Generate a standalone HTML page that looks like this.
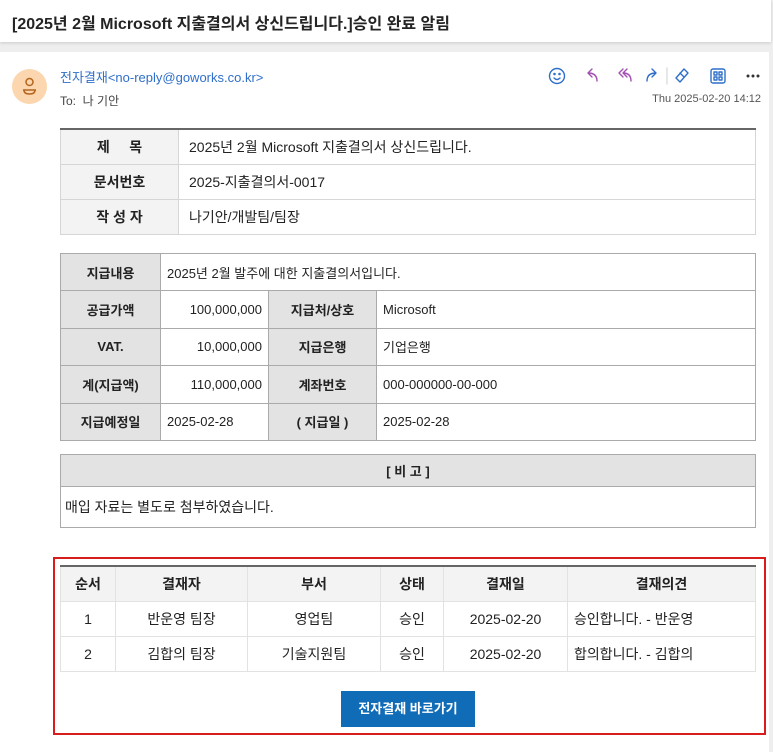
<!DOCTYPE html>
<html><head><meta charset="utf-8"><style>
*{box-sizing:border-box;margin:0;padding:0}
body{width:773px;height:746px;background:#eeeeee;font-family:"Liberation Sans","Noto Sans CJK KR",sans-serif;color:#222;position:relative;overflow:hidden}
.hdr{position:absolute;left:0;top:0;width:771px;height:42px;background:#fff;box-shadow:0 1px 3px rgba(0,0,0,.15)}
.hdr div{position:absolute;left:12px;top:10px;font-size:16px;font-weight:bold;color:#242424}
.card{position:absolute;left:0;top:52px;width:769px;height:700px;background:#fff}
.av{position:absolute;left:12px;top:69px;width:35px;height:35px;border-radius:50%;background:#fbd6ae}
.from{position:absolute;left:60px;top:67px;font-size:13px;color:#2f6fc9}
.to{position:absolute;left:60px;top:92px;font-size:12px;color:#444}
.date{position:absolute;right:12px;top:93px;font-size:11px;color:#555}
table{position:absolute;border-collapse:collapse;font-size:13px}
td{border:1px solid #d6d6d6;padding:0 6px}
.t1{left:60px;top:128px;width:696px;border-top:2px solid #666}
.t1 td{height:35px;font-size:14px;padding-left:10px}
.t1 .l{width:118px;background:#f3f3f3;text-align:center;font-weight:bold;padding:0}
.t2{left:60px;top:253px;width:696px}
.t2 td{height:37.4px;border-color:#aaa}
.t2 .l{background:#e3e3e3;text-align:center;font-weight:bold;padding:0}
.r{text-align:right}
.t4{left:60px;top:454px;width:696px}
.t4 td{border-color:#aaa}
.t3{left:60px;top:565px;width:696px;border-top:2px solid #666;font-size:14px}
.t3 td{height:35px;text-align:center;border-color:#e2e2e2}
.t3 .h td{background:#f3f3f3;font-weight:bold}
.red{position:absolute;left:53px;top:557px;width:713px;height:178px;border:2px solid #d91c1c}
.btn{position:absolute;left:341px;top:691px;width:134px;height:36px;background:#116cb7;color:#fff;font-weight:bold;font-size:13px;text-align:center;line-height:36px}
.ic{position:absolute;top:65px}
</style></head><body>
<div class="hdr"><div>[2025년 2월 Microsoft 지출결의서 상신드립니다.]승인 완료 알림</div></div>
<div class="card"></div>
<div class="av"><svg width="35" height="35" viewBox="0 0 35 35"><circle cx="17.5" cy="13" r="3.5" fill="none" stroke="#b5651d" stroke-width="1.5"/><path d="M11 21h13M12 21q0 4 5.5 4t5.5-4" fill="none" stroke="#b5651d" stroke-width="1.5"/></svg></div>
<div class="from">전자결재&lt;no-reply@goworks.co.kr&gt;</div>
<div class="to">To:&nbsp; 나 기안</div>
<div class="date">Thu 2025-02-20 14:12</div>
<svg class="ic" style="left:545px" width="220" height="22" viewBox="0 0 220 22" fill="none" stroke="#2f6fc9" stroke-width="1.4" stroke-linecap="round" stroke-linejoin="round">
<circle cx="12" cy="11" r="7.5"/><circle cx="9.5" cy="9" r=".6"/><circle cx="14.5" cy="9" r=".6"/><path d="M9 13q3 3 6 0"/>
<path d="M52 16q0-8-9-8M43 8l4-4M43 8l4 4" stroke="#a24fb3"/>
<path d="M86 16q0-8-8-8M78 8l4-4M78 8l4 4M74 8l4-4M74 8l4 4" stroke="#a24fb3"/>
<path d="M102 16q0-8 9-8M111 8l-4-4M111 8l-4 4"/>
<path d="M122 3v16" stroke="#ddd"/>
<path d="M139 4l4 4-8 9-4-4zM135 8l4 4"/>
<rect x="166" y="4" width="14" height="14" rx="2"/><rect x="169" y="7" width="3" height="3"/><rect x="174" y="7" width="3" height="3"/><rect x="169" y="12" width="3" height="3"/><rect x="174" y="12" width="3" height="3"/>
<circle cx="203" cy="11" r=".8" fill="#333" stroke="#333"/><circle cx="208" cy="11" r=".8" fill="#333" stroke="#333"/><circle cx="213" cy="11" r=".8" fill="#333" stroke="#333"/>
</svg>
<table class="t1">
<tr><td class="l">제 &nbsp; &nbsp; 목</td><td>2025년 2월 Microsoft 지출결의서 상신드립니다.</td></tr>
<tr><td class="l">문서번호</td><td>2025-지출결의서-0017</td></tr>
<tr><td class="l">작 성 자</td><td>나기안/개발팀/팀장</td></tr>
</table>
<table class="t2">
<tr><td class="l" style="width:100px">지급내용</td><td colspan="3">2025년 2월 발주에 대한 지출결의서입니다.</td></tr>
<tr><td class="l">공급가액</td><td class="r" style="width:108px">100,000,000</td><td class="l" style="width:108px">지급처/상호</td><td>Microsoft</td></tr>
<tr><td class="l">VAT.</td><td class="r">10,000,000</td><td class="l">지급은행</td><td>기업은행</td></tr>
<tr><td class="l">계(지급액)</td><td class="r">110,000,000</td><td class="l">계좌번호</td><td>000-000000-00-000</td></tr>
<tr><td class="l">지급예정일</td><td>2025-02-28</td><td class="l">( 지급일 )</td><td>2025-02-28</td></tr>
</table>
<table class="t4">
<tr><td style="height:32px;background:#e3e3e3;text-align:center;font-weight:bold">[ 비 고 ]</td></tr>
<tr><td style="height:41px;font-size:14px;padding-left:4px">매입 자료는 별도로 첨부하였습니다.</td></tr>
</table>
<div class="red"></div>
<table class="t3">
<tr class="h"><td style="width:55px">순서</td><td style="width:132px">결재자</td><td style="width:133px">부서</td><td style="width:63px">상태</td><td style="width:124px">결재일</td><td>결재의견</td></tr>
<tr><td>1</td><td>반운영 팀장</td><td>영업팀</td><td>승인</td><td>2025-02-20</td><td style="text-align:left">승인합니다. - 반운영</td></tr>
<tr><td>2</td><td>김합의 팀장</td><td>기술지원팀</td><td>승인</td><td>2025-02-20</td><td style="text-align:left">합의합니다. - 김합의</td></tr>
</table>
<div class="btn">전자결재 바로가기</div>
</body></html>
